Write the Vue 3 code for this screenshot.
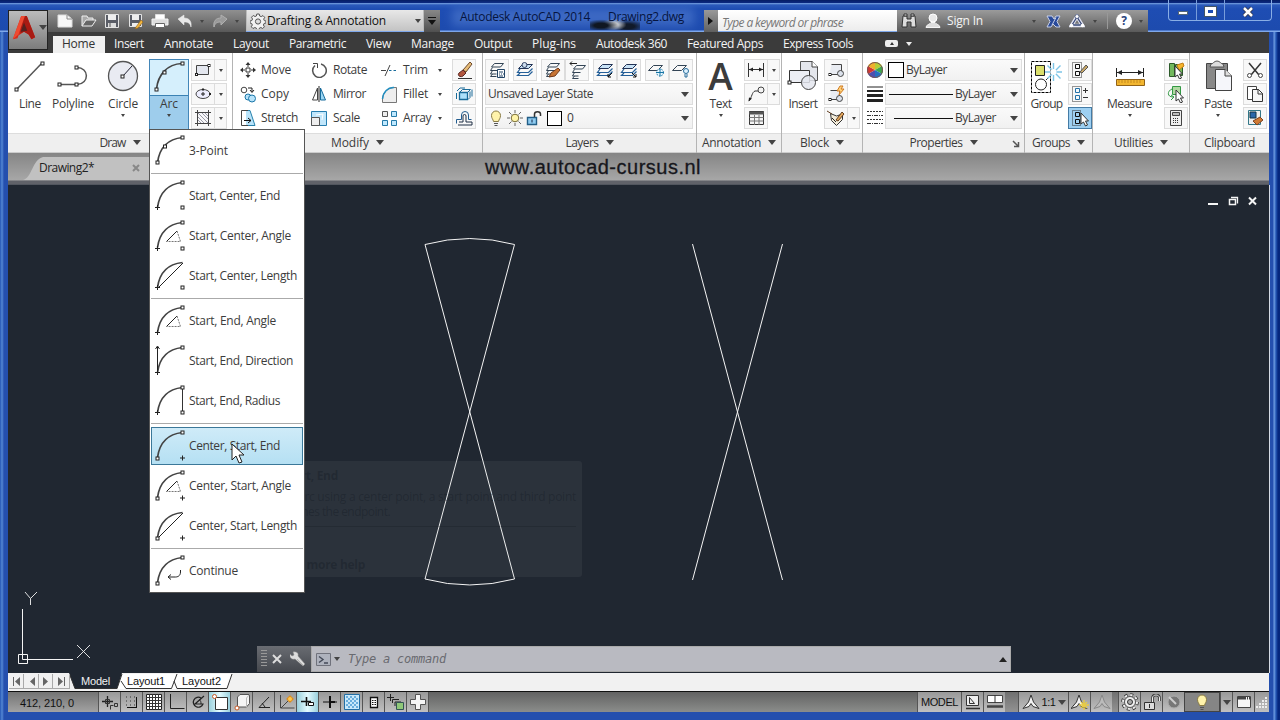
<script setup>
import { h } from 'vue'

// Spreads or tightens a label so that it fills the given width in pixels.
const vFit = {
  mounted(el, { value }) {
    if (!value) return
    const natural = el.getBoundingClientRect().width
    el.style.letterSpacing = (value - natural) / el.textContent.length + 'px'
  }
}

const sq = (x, y, s = 3) => `<rect x="${x - s / 2}" y="${y - s / 2}" width="${s}" height="${s}" fill="#fff" stroke="#222"/>`
const plus = (x, y) => `<path d="M${x - 2.5} ${y}h5M${x} ${y - 2.5}v5" stroke="#222"/>`
const arcLine = '<path d="M6.500 31.500C8.500 17 17 8 31.500 6.500" stroke="#444" stroke-width="1.700"/>'
const angle = '<path d="M15.500 25.500L26 15" stroke="#222"/><path d="M26 15L29.500 25.500H15.500" stroke="#777" stroke-dasharray="2 1"/>'
const chord = '<path d="M8 31L32 7" stroke="#222"/>'
const sheets = '<path d="M6.500 2.500h9l-3 3.500h-9zM4.500 6.500L2.500 9.500h8M4.500 9.500L2.500 13h6M4.500 13L2.500 15.500h6" stroke="#345"/>'
const sheetsBlue = '<path d="M6.500 3.500h10l-4 4h-10z" fill="#c8e2f6" stroke="#235"/><path d="M4 8l-2.500 3.500h11l4-4M4 12l-2.500 2.500h11l4-4" stroke="#245f98" stroke-width="1.200"/>'
const bulb = '<path d="M5.500 11.500C5 9 3.500 8.500 3.500 5.500a4.500 4.500 0 0 1 9 0C12.500 8.500 11 9 10.500 11.500z" fill="#fff3ab" stroke="#887a45"/><path d="M6 13.500h4M6.500 15.500h3" stroke="#555"/>'

const icons = {
  new: [16, 14, '<path d="M1 1h9l5 4v8H1z" fill="#f7f7f7" stroke="#ddd"/><path d="M10 1v4h5" stroke="#888"/>'],
  open: [16, 14, '<path d="M1 12V2h5l1 2h5v2" fill="#aaa" stroke="#eee"/><path d="M1 12l4-6h10l-4 6z" fill="#666" stroke="#eee"/>'],
  save: [16, 16, '<path d="M1.500 1.500h13v13h-13z" fill="#5a5d66" stroke="#e4e4e4"/><path d="M4 2h8v5H4z" fill="#eee" stroke="none"/><path d="M4 10h8v4H4z" fill="#ddd" stroke="none"/><path d="M6 10v4" stroke="#555"/>'],
  saveas: [16, 16, '<path d="M1.500 1.500h12v12h-12z" fill="#5a5d66" stroke="#e4e4e4"/><path d="M4 2h7v5H4zM4 10h7v3H4z" fill="#eee" stroke="none"/><path d="M8 14l5-7 2 2-5 6-3 1z" fill="#f2b53d" stroke="#8b5d16" stroke-width=".600"/>'],
  print: [18, 16, '<path d="M4.500 6V1.500h9V6" fill="#fff" stroke="#ddd"/><path d="M1 6h16v6H1z" fill="#ddd" stroke="#f4f4f4"/><path d="M4.500 10.500h9v4h-9z" fill="#fff" stroke="#666"/>'],
  undo: [16, 14, '<path d="M1 5l6-4v3c5 0 8 3 7 9-1-4-3-5-7-5v3z" fill="#e8e8e8" stroke="#eee" stroke-width=".500"/>'],
  redo: [16, 14, '<path d="M15 5L9 1v3C4 4 1 7 2 13c1-4 3-5 7-5v3z" fill="#9a9a9a" stroke="#b0b0b0"/>'],
  gear: [16, 16, '<path d="M6.800 1h2.400l.5 2 1.500.600 1.800-1 1.700 1.700-1 1.800.6 1.500 1.700.400v2l-2 .500-.600 1.500 1 1.800-1.700 1.700-1.800-1-1.500.600-.5 1.900H6.800l-.5-1.900-1.500-.600-1.800 1-1.700-1.700 1-1.800-.6-1.500L0 10V8l1.900-.500.600-1.500-1-1.800L3.200 2.500l1.800 1 1.400-.500z" fill="#f2f2f2" stroke="#555"/><circle cx="8" cy="8.500" r="2.600" fill="#ddd" stroke="#555"/>'],
  logo: [28, 28, '<path d="M2 26L11 1h6l9 23-4 2-3-5-5-3-6 4-1 3z" fill="#d52b1c" stroke="none"/><path d="M11 1h6l9 23-4 2-3-5-5-3-4 2z" fill="#a81b13" stroke="none"/><path d="M14 8l3.500 9-7 1z" fill="#54221f" stroke="none"/><path d="M11 1h4L8 21l-6 5z" fill="#ee4a31" stroke="none"/>'],
  binoc: [16, 16, '<path d="M2 3h4v3h4V3h4l1 11h-5V9H6v5H1z" fill="#ddd" stroke="#333"/><path d="M3 1h3v2H3zM10 1h3v2h-3z" fill="#eee" stroke="#333"/>'],
  user: [16, 16, '<circle cx="8" cy="5" r="4" fill="#e8e8e8" stroke="#fff"/><path d="M1 14.500c0-3 4-3 5-5h4c1 2 5 2 5 5z" fill="#ddd" stroke="#f5f5f5"/>'],
  exchange: [15, 13, '<path d="M1 1h5l2 3 2-3h4L11 6.500 14 12h-4L7 9l-2 3H1l3-5.500z" fill="#294a9a" stroke="#c8d0e8"/><path d="M10 2.500L6 10" stroke="#c8d0e8"/>'],
  a360: [16, 14, '<path d="M8 2.500L2.500 11.500h11z" stroke="#e3e5f4" stroke-width="3.500"/><path d="M8 3L3 11h10z" stroke="#394976" stroke-width="1.300"/><circle cx="8" cy="2.500" r="2" fill="#fff" stroke="#394976" stroke-width=".700"/><circle cx="2.500" cy="11.500" r="1.800" fill="#fff" stroke="none"/><circle cx="13.500" cy="11.500" r="1.800" fill="#fff" stroke="none"/>'],
  line: [32, 32, '<path d="M3 29L28 3" stroke="#555" stroke-width="1.500"/>' + sq(2.5, 29.5) + sq(28.5, 3.5)],
  polyline: [32, 32, '<path d="M3 24.500h17c13-1 12-17 0-17" stroke="#555" stroke-width="1.500"/>' + sq(2.5, 24.5) + sq(19.5, 24.5) + sq(19.5, 7.5)],
  circle: [32, 32, '<circle cx="16" cy="16" r="14.500" fill="#e9ebf2" stroke="#555" stroke-width="1.300"/><path d="M16 16L25 6" stroke="#223"/>' + sq(15.5, 16.5)],
  arc: [32, 32, '<path d="M3.500 29C5 15 14 4 29 3.500" stroke="#444" stroke-width="1.700"/>' + sq(3.5, 29.5) + sq(11.5, 12.5) + sq(29.5, 3.5)],
  rect: [16, 16, '<path d="M1.500 3.500h12v9h-12z" fill="#e4e7ef" stroke="#444"/>' + sq(1.5, 12.5, 2) + sq(14, 3.5, 2)],
  ellipse: [16, 16, '<ellipse cx="8" cy="8" rx="7" ry="4.500" fill="#eef" stroke="#444"/><path d="M6 8h4M8 6v4" stroke="#222"/>' + sq(15, 8, 1) + sq(8, 3.5, 1)],
  hatch: [18, 18, '<path d="M3.500 1v16M14.500 1v16M1 3.500h16M1 14.500h16" stroke="#444"/><path d="M4 4l10 10M8 4l6 6M4 8l6 6M4 11l3 3M11 4l3 3" stroke="#99a"/>'],
  move: [16, 16, '<path d="M6 6h4v4H6zM8 1v4M8 11v4M1 8h4M11 8h4" stroke="#333"/><path d="M8 0l2.500 3h-5zM8 16l2.500-3h-5zM0 8l3-2.500v5zM16 8l-3-2.500v5z" fill="#333" stroke="none"/>'],
  copy: [18, 17, '<circle cx="4" cy="4" r="2.800"/><circle cx="8" cy="11" r="3" fill="#b8e3fa" stroke="#1976a8"/><circle cx="12" cy="12.500" r="3.500" fill="#b8e3fa" stroke="#1976a8"/><path d="M8 2h4v4M10 4l2 2.500 2-2.500" stroke="#222"/>'],
  stretch: [17, 17, '<path d="M6 .500h4l5 15H6" fill="#b8e3fa" stroke="#2680aa"/><path d="M8 .500H1.500v15H8" stroke="#444"/><path d="M4 10.500h7M8 8l3 2.500-3 2.500" stroke="#111"/>'],
  rotate: [16, 16, '<path d="M10 2A6.800 6.800 0 1 1 4 3.500" stroke="#555" stroke-width="1.500"/><path d="M2 1.500h4.500V6" stroke="#444"/>'],
  mirror: [16, 16, '<path d="M6.500 2v12h-5z" fill="#fff" stroke="#444"/><path d="M9.500 2v12h5z" fill="#9cd7f4" stroke="#176b9b"/><path d="M8 0v16" stroke="#222"/>'],
  scale: [17, 17, '<path d="M.500 1.500h15v14H.500z" fill="#c0e6fb" stroke="#267daf"/><path d="M.500 7.500h8v8h-8z" fill="#eee" stroke="#555"/><path d="M5 5l7-1-1 6" stroke="#fff"/>'],
  trim: [17, 16, '<path d="M0 8.500h5M9 3L4 14" stroke="#444"/><path d="M8 8.500h9" stroke="#176b9b" stroke-dasharray="2.500 2"/>'],
  fillet: [17, 17, '<path d="M1.500 16.500V13C2 6 7 1 15.500 1.500v15z" fill="#eee" stroke="#777"/><path d="M1.500 13C2 6 7 1 13 1.500" stroke="#238fc1" stroke-width="1.500"/>'],
  array: [17, 17, '<path d="M1.500 1.500h5v5h-5z" fill="#eee" stroke="#555"/><path d="M10.500 1.500h5v5h-5zM1.500 10.500h5v5h-5zM10.500 10.500h5v5h-5z" fill="#c0e9ff" stroke="#247aa8"/>'],
  erase: [18, 18, '<path d="M8 9L15 1l2 2-6 8z" fill="#e7bd78" stroke="#6d482b"/><path d="M4 12l4-3 3 3-3 3c-3 2-6-1-4-3z" fill="#b2573e" stroke="#5c2924"/><path d="M3 17.500h14" stroke="#333"/>'],
  explode: [18, 18, '<path d="M4.500 7.500h8v7h-8z" fill="#ace1fb" stroke="#1a6b99" stroke-width="1.300"/><path d="M4.500 7.500l3-3h8l-3 3M15 6.500v6l-2 2" stroke="#1a6b99"/><path d="M1.500 8v6M2 6l3-3h5M17 4.500v7" stroke="#1a6b99"/>'],
  offset: [18, 18, '<path d="M1.500 14.500v-4h5V6a3.500 3.500 0 0 1 7 0v4.500h3" stroke="#225d90"/><path d="M3 16h14v-3h-6V7a1.500 1.500 0 0 0-3 0v6H4" stroke="#1e2e45"/>'],
  layerProps: [18, 18, sheets + '<path d="M9.500 8.500h7v8h-7z" fill="#fff" stroke="#246"/><path d="M11 11h4M11 13h1M13 13h1M15 13h1M11 15h4" stroke="#246"/>'],
  layerMake: [18, 18, sheetsBlue + '<circle cx="8.500" cy="4" r="2.500" fill="#cde" stroke="#346"/>'],
  layerMatch: [18, 18, sheets + '<path d="M7 12l7-5 2 2-5 6-6 1z" fill="#c87535" stroke="#713b1d"/>'],
  layerPrev: [18, 18, '<g transform="translate(2 2)">' + sheets + '</g><path d="M9 2.500H2M4 .500L2 2.500l2 2" stroke="#222"/>'],
  layerIso: [18, 18, sheetsBlue + '<path d="M16 12l-4 4M12 13v3h3" stroke="#111"/>'],
  layerUniso: [18, 18, sheetsBlue + '<path d="M12 12l4 4M16 13v3h-3" stroke="#111"/>'],
  layerFreeze: [18, 18, '<path d="M5.500 4.500h9l-5 5h-9z" stroke="#345"/><circle cx="12" cy="11.500" r="3.500" fill="#e7f7ff" stroke="#1674a5" stroke-dasharray="1.500 1"/><path d="M8 11.500h8M12 7.500v8" stroke="#1674a5"/>'],
  layerOff: [18, 18, '<path d="M5.500 4.500h9l-5 5h-9z" stroke="#345"/><circle cx="14" cy="10" r="2.500" fill="#dff2ff" stroke="#276c9b"/><path d="M13 13v3h2v-3" stroke="#276c9b"/>'],
  bulb: [16, 17, bulb],
  sun: [16, 16, '<circle cx="8" cy="8" r="3.800" fill="#fff4a9" stroke="#776b35"/><path d="M8 0v3M8 13v3M0 8h3M13 8h3M2 2l2.500 2.500M11.500 11.500L14 14M14 2l-2.500 2.500M4.500 11.500L2 14" stroke="#666"/>'],
  lock: [17, 16, '<path d="M1.500 7.500h9v7h-9z" fill="#8ecbf0" stroke="#235e86" stroke-width="1.400"/><path d="M8.500 7V4c0-3 6-3 6 0v2" stroke="#333" stroke-width="1.500"/><path d="M6 9.500v3" stroke="#124"/>'],
  greylock: [18, 17, '<path d="M1.500 8.500h10v7h-10z" fill="#ddd" stroke="#333"/><path d="M9.500 8V4c0-4 7-4 7 0v3" stroke="#333" stroke-width="2.500"/><path d="M9.500 8V4c0-4 7-4 7 0v3" stroke="#eee"/><path d="M6.500 10v4" stroke="#333"/>'],
  dim: [18, 18, '<path d="M1.500 2v14M16.500 2v14M2 8.500h14" stroke="#333"/><path d="M2 8.500l4-2v4zM16 8.500l-4-2v4z" fill="#222" stroke="none"/>'],
  leader: [18, 18, '<circle cx="14" cy="5" r="3" fill="#f4f4f4"/><path d="M11 6H8c-3 1-3 6-6 10" stroke="#333"/><path d="M1.500 16.500l.5-4 3 1z" fill="#222" stroke="none"/>'],
  table: [17, 17, '<path d="M1.500 1.500h14v13h-14z" fill="#f4f4f4" stroke="#333"/><path d="M1 3h15" stroke="#555" stroke-width="3"/><path d="M1.500 7.500h14M1.500 11h14M6.500 5v10M11 5v10" stroke="#777"/>'],
  insert: [32, 32, '<path d="M13.500 1.500h12l5 5v14h-17z" fill="#e4e6ec" stroke="#555"/><path d="M25 1v6h6" fill="#fff"/><path d="M2.500 10.500h20v12h-20z" fill="#eceef4" stroke="#333"/><circle cx="21.500" cy="22.500" r="7" fill="#e4e6ef" fill-opacity=".850" stroke="#444"/>' + sq(2.5, 22.5)],
  blockCreate: [18, 18, '<path d="M4.500 3.500h10v10h-12" fill="#e9ecf2"/><circle cx="13.500" cy="12.500" r="3" fill="#dbe1eb"/>' + sq(3, 13.5, 2)],
  blockEdit: [18, 18, '<path d="M3.500 5.500h9v9h-9" fill="#e9ecf2"/><circle cx="12.500" cy="13.500" r="3" fill="#dbe1eb"/><path d="M13 1l-3 5h3l-1 4 5-6h-3l2-3z" fill="#ffd37c" stroke="#d07a20"/>' + sq(3, 14.5, 2)],
  blockAttr: [18, 18, '<path d="M3.500 4.500l1 7 5 5 6-6V5l-6 2z" fill="#f4ecd9" stroke="#333"/><path d="M0 2l5 3M9 11l6-8 2 2-6 7z" fill="#e3a85d" stroke="#613e20"/><path d="M5 9l4 4" stroke="#222"/>'],
  wheel: [16, 16, '<g stroke="none"><path d="M8 8V0a8 8 0 0 1 7 4z" fill="#b6cf35"/><path d="M8 8l7-4a8 8 0 0 1 0 8z" fill="#3fa84f"/><path d="M8 8l7 4a8 8 0 0 1-7 4z" fill="#2670c0"/><path d="M8 8v8a8 8 0 0 1-7-4z" fill="#4e4fb0"/><path d="M8 8l-7 4a8 8 0 0 1 0-8z" fill="#d43731"/><path d="M8 8L1 4a8 8 0 0 1 7-4z" fill="#efb12d"/></g><circle cx="8" cy="8" r="7.500" stroke="#755"/>'],
  weights: [16, 16, '<path d="M0 1h16" stroke="#222"/><path d="M0 5h16" stroke="#222" stroke-width="2"/><path d="M0 9.500h16" stroke="#222" stroke-width="3"/><path d="M0 14.500h16" stroke="#222" stroke-width="3"/>'],
  types: [16, 16, '<path d="M0 1.500h16M0 9.500h16" stroke="#333" stroke-dasharray="2 1"/><path d="M0 5.500h16M0 13.500h16" stroke="#333" stroke-dasharray="4 1 1 1"/>'],
  group: [34, 34, '<path d="M1.500 1.500h19v31h-19z" stroke="#000" stroke-dasharray="3 1"/><path d="M5.500 5.500h9v10h-9z" fill="#dbdf6c" stroke="#222"/><circle cx="11" cy="24.500" r="5.500" stroke="#222"/><path d="M16 20l5-5" stroke="#222"/><path d="M23.500 3v18M15 12h17M17.500 5.500l13 13M17.500 18.500l13-13" stroke="#7dc5e7" stroke-width="1.400"/><circle cx="23.500" cy="12" r="3" fill="#fff" stroke="none"/>'],
  ungroup: [18, 18, '<path d="M1.500 1.500h9v15h-9z" stroke="#333" stroke-dasharray="1 1"/><path d="M4.500 3.500h4v4h-4zM4.500 10.500h4v4h-4z" stroke="#111"/><path d="M9 11l6-7 2 2-6 6z" fill="#caa968" stroke="#555"/>'],
  groupEdit: [18, 18, '<path d="M1.500 1.500h9v15h-9z" stroke="#333" stroke-dasharray="1 1"/><path d="M4.500 3.500h4v4h-4zM4.500 10.500h4v4h-4z" stroke="#2572a8"/><path d="M12 5.500h5M14.500 3v5M12 12.500h5" stroke="#333"/>'],
  groupSel: [18, 18, '<path d="M1.500 1.500h8v15h-8z" stroke="#333" stroke-dasharray="1 1"/><path d="M4.500 3.500h4v4h-4zM4.500 10.500h4v4h-4z" stroke="#111"/><path d="M10 4v11l2.500-2 2 4 2-1-2-4h3z" fill="#fff" stroke="#333"/>'],
  measure: [32, 32, '<path d="M2.500 8v9M29.500 8v9M3 12.500h26" stroke="#222"/><path d="M3 12.500l5-2.500v5zM29 12.500l-5-2.500v5z" fill="#222" stroke="none"/><path d="M2.500 19.500h28v6h-28z" fill="#f2b630" stroke="#926318"/><path d="M5 20v3M8 20v3M11 20v3M14 20v3M17 20v3M20 20v3M23 20v3M26 20v3" stroke="#c58a1c"/>'],
  select: [18, 18, '<path d="M2.500 2.500h5v13h-5zM8.500 3.500h7v11h-7z" fill="#72b85d" stroke="#2c5a2a"/><path d="M10 4l6-2 1 3-5 4z" fill="#f6b52d" stroke="#c47f18"/><path d="M8 5v11l2.500-2 2 4 2-1-2-4h3z" fill="#fff" stroke="#333"/>'],
  quick: [18, 18, '<path d="M5.500 1.500h8v8h-8z" fill="#b0d9a1" stroke="#394"/><path d="M5 4C0 6 0 12 6 12M4 10l3 2-3 3" stroke="#394"/><path d="M9 5v11l2.500-2 2 4 2-1-2-4h3z" fill="#fff" stroke="#333"/>'],
  calc: [16, 16, '<path d="M2.500.500h11v15h-11z" fill="#eee"/><path d="M4.500 2.500h7v3h-7z" fill="#bbb"/><path d="M5 8.500h6M5 10.500h6M5 12.500h6" stroke="#333" stroke-dasharray="1 1"/>'],
  paste: [28, 32, '<path d="M2.500 3.500h21v25h-21z" fill="#888" stroke="#444"/><path d="M7 4c2 0 3-3 6-3s4 3 6 3l1 3H6z" fill="#ddd" stroke="#555"/><path d="M11.500 9.500h10l6 6v15h-16z" fill="#f5f6fa" stroke="#444"/><path d="M21 9v7h7" fill="#ddd"/>'],
  cut: [18, 18, '<path d="M3 2l10 12M15 2L5 14" stroke="#333" stroke-width="1.500"/><circle cx="3.500" cy="14.500" r="2" fill="#fff"/><circle cx="14.500" cy="14.500" r="2" fill="#fff"/>'],
  copyclip: [18, 18, '<path d="M1.500 1.500h9v13h-9z" fill="#fff"/><path d="M6.500 4.500h6l4 4v8h-10z" fill="#f5f5f5" stroke="#333"/><path d="M12 4v5h5" stroke="#333"/>'],
  match: [18, 18, '<path d="M2.500 1.500h12v14h-12z" fill="#eee" stroke="#378"/><path d="M4 3h6v6H4z" fill="#2a66a9" stroke="#134"/><path d="M7 12l7-4 3 3-6 5z" fill="#d07932" stroke="#7a4020"/>'],
  wrench: [16, 16, '<path d="M13 14L7 8M3 1l1 3-2 1-2-2c-1 4 2 6 5 5l8 7 2-2-7-8c1-3-2-5-5-4z" fill="#ddd" stroke="#888" stroke-width=".500"/>'],
  prompt: [15, 13, '<path d="M.500.500h14v12H.500z" fill="#aeb2bd" stroke="#70727c"/><path d="M3 3.500l4 3-4 3M8 10h4" stroke="#444a58" stroke-width="1.400"/>'],
  s1: [18, 18, '<path d="M1 8.500h11M6.500 3v11" stroke="#222" stroke-width="1.300"/><path d="M4.500 6.500h4v4h-4zM9.500 16.500v-4h3M13.500 10.500h3v3h-3z" stroke="#333"/>'],
  s2: [18, 18, '<path d="M3 4h9M3 8h9M3 12h9" stroke="#333" stroke-dasharray="1 3"/><path d="M4 14.500h9M13.500 4v11" stroke="#111"/>'],
  s3: [18, 18, '<path d="M1.500 1.500h15v15h-15z" fill="#fff" stroke="#222"/><path d="M4.500 1v16M7.500 1v16M10.500 1v16M13.500 1v16M1 4.500h16M1 7.500h16M1 10.500h16M1 13.500h16" stroke="#333"/>'],
  s4: [18, 18, '<path d="M3.500 1v14.500h14" stroke="#222"/>'],
  s5: [18, 18, '<path d="M12 5A5 5 0 1 0 14 11H6l9-8" stroke="#222" stroke-width="1.200"/><path d="M10 6.500c2 1 2 3 2 4.500" stroke="#222"/>'],
  s6: [18, 18, '<path d="M4.500 4.500h12v12h-12z" fill="#fff" stroke="#333"/><circle cx="3.500" cy="3.500" r="2" fill="#fff" stroke="#c95b28"/>'],
  s7: [18, 18, '<path d="M7 1.500h9.500v9l-3 3.500H4.500V4z" fill="#f5f5f5" stroke="#555"/><path d="M13.500 14V5l3-3.500" stroke="#bbb"/><circle cx="4" cy="15" r="2" fill="#fff" stroke="#c95b28"/>'],
  s8: [18, 18, '<path d="M14 4L4 14.500h11M7 10l3 4" stroke="#222"/>'],
  s9: [18, 18, '<path d="M3.500 2v13h14M4 15l9-9" stroke="#444"/><path d="M13 2.500v7M9.500 6h7" stroke="#dc8a18" stroke-width="1.500"/><circle cx="13" cy="6" r="2.500" fill="#ffc84d" stroke="#dc8a18"/>'],
  s10: [18, 18, '<path d="M2 8.500h10M7.500 4v9" stroke="#111" stroke-width="1.600"/><path d="M9.500 9.500h5v3h-5z" fill="#fff" stroke="#111"/>'],
  s11: [18, 18, '<path d="M2 9h14" stroke="#111"/><path d="M9 3v12M9 9h5" stroke="#111" stroke-width="2"/>'],
  s12: [18, 18, '<path d="M1.500 1.500h15v15h-15z" fill="#c8e8fa" stroke="#236fa5"/><path d="M3 4h12M3 8h12M3 12h12" stroke="#68addd" stroke-width="2" stroke-dasharray="2 2"/><path d="M5 6h10M5 10h10M5 14h10" stroke="#68addd" stroke-width="2" stroke-dasharray="2 2"/>'],
  s13: [18, 18, '<path d="M5.500 4.500h7v10h-7z" fill="#fff" stroke="#111" stroke-width="1.300"/><path d="M7 7.500h4M7 9.500h4M7 11.500h4" stroke="#111" stroke-dasharray="1.500 1"/>'],
  s14: [18, 18, '<path d="M0 4.500h7M3.500 1v7M5.500 10V6.500H12M8 13v-4h6" stroke="#222"/><path d="M9.500 9.500h7v7h-7z" fill="#8fc878" stroke="#355"/>'],
  s15: [18, 18, '<path d="M6.500 1.500h5v5h5v5h-5v5h-5v-5h-5v-5h5z" fill="#f6f6f6" stroke="#555"/>'],
  m1: [18, 18, '<path d="M2.500 2.500h12v10h-12z" fill="#eee" stroke="#333"/><path d="M5.500 4.500v6h5z" stroke="#333"/><path d="M2 15.500h14" stroke="#333" stroke-width="1.500"/>'],
  m2: [18, 18, '<path d="M1.500 2.500h15v7h-15z" fill="#fff" stroke="#444"/><path d="M9 2v8" stroke="#333"/><path d="M1 13.500h16" stroke="#444" stroke-width="2.500"/>'],
  scaleFig: [18, 17, '<path d="M9 1L6.500 8 1 14.500l6-2 2-3 2 3 6 2L11.500 8z" fill="#f3f3f3" stroke="#333"/>'],
  scaleDim: [18, 17, '<path d="M9 1L6.500 8 1 14.500l6-2 2-3 2 3 6 2L11.500 8z" fill="#bbb" stroke="#888"/>'],
  scaleStar: [18, 17, '<path d="M8 1L5.500 8 0 14.500l6-2 2-3 2 3 6 2L10.500 8z" fill="#f3f3f3" stroke="#333"/><path d="M13 6v10M8 11h10M10 8l6 6M16 8l-6 6" stroke="#e7cb45" stroke-width="1.400"/>'],
  gearLight: [18, 18, '<circle cx="9" cy="9" r="7.300" stroke="#333" stroke-width="3" stroke-dasharray="3 2.730"/><circle cx="9" cy="9" r="7" stroke="#eee" stroke-width="2" stroke-dasharray="2.300 3.200"/><circle cx="9" cy="9" r="5.500" fill="#eee" stroke="#555"/><circle cx="9" cy="9" r="2.500" fill="#aaa" stroke="#333"/>'],
  ball: [16, 16, '<circle cx="8" cy="8" r="6" fill="#777" stroke="#aaa"/><path d="M3 3l7 7" stroke="#ccc" stroke-width="2"/>'],
  clean: [16, 16, '<path d="M1.500 2.500h13v11h-13z" fill="#f5f5f5" stroke="#444"/><path d="M2 4h12" stroke="#444" stroke-width="3" stroke-dasharray="8 1 1 1 1 1"/>'],
  grip: [14, 16, '<path d="M11 3v2M8 6v2M11 6v2M5 9v2M8 9v2M11 9v2M2 12v2M5 12v2M8 12v2M11 12v2" stroke="#eee" stroke-width="2"/>'],
  a3: [36, 40, arcLine + sq(31.5, 6.5) + sq(14, 15.5) + sq(6.5, 31.5)],
  sce: [36, 40, arcLine + sq(31.5, 6.5) + plus(6.5, 31.5) + sq(31.5, 31.5)],
  sca: [36, 40, arcLine + sq(31.5, 6.5) + plus(6.5, 32.5) + sq(31.5, 32.5) + angle],
  scl: [36, 40, arcLine + chord + plus(6.5, 31.5) + sq(31.5, 31.5)],
  sea: [36, 40, arcLine + sq(31.5, 6.5) + plus(6.5, 31.5) + angle],
  sed: [36, 40, arcLine + sq(31.5, 6.5) + plus(6.5, 31.5) + '<path d="M6.500 31V6M4.500 8l2-3 2 3" stroke="#222"/>'],
  ser: [36, 40, arcLine + '<path d="M31.500 8v23" stroke="#333"/>' + sq(31.5, 6.5) + plus(6.5, 31.5) + sq(31.5, 31.5)],
  cse: [36, 40, arcLine + sq(31.5, 6.5) + sq(6.5, 32.5) + plus(31.5, 32)],
  csa: [36, 40, arcLine + sq(31.5, 6.5) + sq(6.5, 32.5) + plus(31.5, 32) + angle],
  csl: [36, 40, arcLine + chord + sq(6.5, 32.5) + plus(31.5, 32)],
  cont: [36, 40, arcLine + sq(31.5, 6.5) + sq(6.5, 32.5) + '<path d="M29.500 19v2c0 4-3 5-5 5h-7M20 23.500l-3 2.500 3 2.500" stroke="#222"/>']
}

const Icon = (p) => {
  const [w, ht, body] = icons[p.name]
  return h('svg', { class: 'ico', width: w, height: ht, viewBox: `0 0 ${w} ${ht}`, innerHTML: body })
}
Icon.props = ['name']

const tabs = [['Home', 33], ['Insert', 30], ['Annotate', 49], ['Layout', 36], ['Parametric', 57], ['View', 25], ['Manage', 43], ['Output', 38], ['Plug-ins', 44], ['Autodesk 360', 71], ['Featured Apps', 76], ['Express Tools', 70]]
const modify = [
  [['move', 'Move', 30], ['copy', 'Copy', 28], ['stretch', 'Stretch', 37]],
  [['rotate', 'Rotate', 34], ['mirror', 'Mirror', 33], ['scale', 'Scale', 27]],
  [['trim', 'Trim', 25], ['fillet', 'Fillet', 25], ['array', 'Array', 28]]
]
const layerTools = [['layerProps'], ['layerMake'], ['layerMatch', 'layerPrev'], ['layerIso', 'layerUniso'], ['layerFreeze', 'layerOff']]
const arcMenu = [
  [['a3', '3-Point', 39]],
  [['sce', 'Start, Center, End', 91], ['sca', 'Start, Center, Angle', 102], ['scl', 'Start, Center, Length', 108]],
  [['sea', 'Start, End, Angle', 87], ['sed', 'Start, End, Direction', 104], ['ser', 'Start, End, Radius', 91]],
  [['cse', 'Center, Start, End', 91], ['csa', 'Center, Start, Angle', 102], ['csl', 'Center, Start, Length', 108]],
  [['cont', 'Continue', 49]]
]
const statusOn = [6, 10]
</script>

<template>
  <div class="window">
    <header class="titlebar">
      <div class="app-button"><Icon name="logo" /><i class="caret"></i></div>
      <div class="quick">
        <Icon name="new" /><Icon name="open" /><Icon name="save" /><Icon name="saveas" /><Icon name="print" /><Icon name="undo" />
        <i class="caret tiny"></i><Icon name="redo" /><i class="caret tiny"></i>
      </div>
      <div class="workspace"><Icon name="gear" /><span v-fit="119">Drafting &amp; Annotation</span><i class="caret"></i></div>
      <div class="more"><b></b><i class="caret"></i></div>
      <div class="title"><div class="glow"></div><div class="smudge"></div><span v-fit="130">Autodesk AutoCAD 2014</span><span class="doc" v-fit="76">Drawing2.dwg</span></div>
      <div class="search-go"><i></i></div>
      <div class="search"><span v-fit="121">Type a keyword or phrase</span></div>
      <div class="account">
        <Icon name="binoc" /><Icon name="user" /><span v-fit="36">Sign In</span><i class="caret tiny"></i>
        <Icon name="exchange" /><Icon name="a360" /><i class="caret tiny"></i><s></s><b class="help">?</b><i class="caret tiny"></i>
      </div>
      <div class="controls"><span><i class="min"></i></span><span><i class="max"></i></span>
        <span><svg width="12" height="12" viewBox="0 0 12 12"><path d="M2 2l8 8M10 2l-8 8" stroke="#334" stroke-width="4" /><path d="M2 2l8 8M10 2l-8 8" stroke="#fff" stroke-width="2.500" /></svg></span>
      </div>
    </header>

    <nav class="tabs">
      <div v-for="(t, i) in tabs" :key="t[0]" class="tab" :class="{ active: i === 0 }"><span v-fit="t[1]">{{ t[0] }}</span></div>
      <div class="pill"><i></i></div><i class="caret white"></i>
    </nav>

    <section class="ribbon">
      <div class="panel draw">
        <div class="body">
          <div class="big line"><Icon name="line" /><span v-fit="22">Line</span></div>
          <div class="big poly"><Icon name="polyline" /><span v-fit="42">Polyline</span></div>
          <div class="big circ"><Icon name="circle" /><span v-fit="30">Circle</span><i class="caret tiny"></i></div>
          <div class="big arc"><Icon name="arc" /><span v-fit="18">Arc</span><i class="caret tiny"></i></div>
          <div class="stack">
            <div v-for="n in ['rect', 'ellipse', 'hatch']" :key="n" class="split"><div class="btn"><Icon :name="n" /></div><div class="drop"><i class="caret tiny"></i></div></div>
          </div>
        </div>
        <footer><span v-fit="26">Draw</span><i class="caret"></i></footer>
      </div>

      <div class="panel modify">
        <div class="body">
          <div v-for="(col, c) in modify" :key="c" class="list">
            <div v-for="m in col" :key="m[0]" class="cmd"><div class="slot"><Icon :name="m[0]" /></div><span v-fit="m[2]">{{ m[1] }}</span><i v-if="c === 2" class="caret tiny"></i></div>
          </div>
          <div class="stack"><div v-for="n in ['erase', 'explode', 'offset']" :key="n" class="btn"><Icon :name="n" /></div></div>
        </div>
        <footer><span v-fit="38">Modify</span><i class="caret"></i></footer>
      </div>

      <div class="panel layers">
        <div class="body">
          <div class="stack wide">
            <div class="toolrow"><div v-for="g in layerTools" :key="g[0]" class="pair"><div v-for="n in g" :key="n" class="btn"><Icon :name="n" /></div></div></div>
            <div class="combo"><span v-fit="105">Unsaved Layer State</span><i class="caret"></i></div>
            <div class="combo state"><Icon name="bulb" /><Icon name="sun" /><Icon name="lock" /><b class="swatch"></b><span>0</span><i class="caret"></i></div>
          </div>
        </div>
        <footer><span v-fit="33">Layers</span><i class="caret"></i></footer>
      </div>

      <div class="panel annotation">
        <div class="body">
          <div class="big"><b class="letter">A</b><span v-fit="22">Text</span><i class="caret tiny"></i></div>
          <div class="stack">
            <div v-for="n in ['dim', 'leader']" :key="n" class="split"><div class="btn"><Icon :name="n" /></div><div class="drop"><i class="caret tiny"></i></div></div>
            <div class="btn"><Icon name="table" /></div>
          </div>
        </div>
        <footer><span v-fit="59">Annotation</span><i class="caret"></i></footer>
      </div>

      <div class="panel block">
        <div class="body">
          <div class="big"><Icon name="insert" /><span v-fit="29">Insert</span></div>
          <div class="stack">
            <div class="btn"><Icon name="blockCreate" /></div>
            <div class="btn"><Icon name="blockEdit" /></div>
            <div class="split"><div class="btn"><Icon name="blockAttr" /></div><div class="drop"><i class="caret tiny"></i></div></div>
          </div>
        </div>
        <footer><span v-fit="29">Block</span><i class="caret"></i></footer>
      </div>

      <div class="panel properties">
        <div class="body">
          <div class="stack keys"><div v-for="n in ['wheel', 'weights', 'types']" :key="n"><Icon :name="n" /></div></div>
          <div class="stack vals">
            <div class="combo"><b class="swatch"></b><span v-fit="41">ByLayer</span><i class="caret"></i></div>
            <div class="combo"><b class="rule"></b><span v-fit="41">ByLayer</span><i class="caret"></i></div>
            <div class="combo"><b class="rule short"></b><span v-fit="41">ByLayer</span><i class="caret"></i></div>
          </div>
        </div>
        <footer><span v-fit="53">Properties</span><i class="caret"></i><svg class="launch" width="8" height="8" viewBox="0 0 8 8"><path d="M1 1l5 5M6.500 2v4.500H2" /></svg></footer>
      </div>

      <div class="panel groups">
        <div class="body">
          <div class="big"><Icon name="group" /><span v-fit="32">Group</span></div>
          <div class="stack"><div class="btn"><Icon name="ungroup" /></div><div class="btn"><Icon name="groupEdit" /></div><div class="btn on"><Icon name="groupSel" /></div></div>
        </div>
        <footer><span v-fit="38">Groups</span><i class="caret"></i></footer>
      </div>

      <div class="panel utilities">
        <div class="body">
          <div class="big"><Icon name="measure" /><span v-fit="45">Measure</span><i class="caret tiny"></i></div>
          <div class="stack"><div v-for="n in ['select', 'quick', 'calc']" :key="n" class="btn"><Icon :name="n" /></div></div>
        </div>
        <footer><span v-fit="39">Utilities</span><i class="caret"></i></footer>
      </div>

      <div class="panel clipboard">
        <div class="body">
          <div class="big"><Icon name="paste" /><span v-fit="28">Paste</span><i class="caret tiny"></i></div>
          <div class="stack"><div v-for="n in ['cut', 'copyclip', 'match']" :key="n" class="btn"><Icon :name="n" /></div></div>
        </div>
        <footer><span v-fit="51">Clipboard</span></footer>
      </div>
    </section>

    <div class="files">
      <svg class="shape" width="150" height="24" viewBox="0 0 150 24"><path d="M0 24C9 22 9 4 20 1H150V24z" fill="#c1c1c1" /></svg>
      <span class="file" v-fit="55">Drawing2*</span><svg class="x" width="8" height="8" viewBox="0 0 8 8"><path d="M1 1l6 6M7 1L1 7" stroke="#888" stroke-width="2" /></svg>
      <span class="site" v-fit="216">www.autocad-cursus.nl</span>
    </div>

    <main class="drawing">
      <svg class="model" width="1261" height="488" viewBox="8 185 1261 488">
        <g fill="none" stroke="#f4f4f4">
          <path d="M425 244.500A173.300 173.300 0 0 1 514.500 244.500L425 579A173.300 173.300 0 0 0 514.500 579Z" />
          <path d="M692.500 244L782.500 580M782.500 244L692.500 580" />
          <path d="M22.500 609V659.500H73M18.500 654.500h9v9h-9z" />
          <path d="M25 592l5.500 6.500L37 592M30.500 598.500V605M77 645l13 13M90 645l-13 13" stroke-width=".900" />
        </g>
        <g fill="none" stroke="#f5f5f5" stroke-width="2">
          <path d="M1208 204h10M1249 197.500l7 7M1256 197.500l-7 7" /><path d="M1229.500 199.500h6v5h-6z" stroke-width="1.500" /><path d="M1231 197.500h6.500v6" stroke-width="1.300" />
        </g>
      </svg>
      <div class="tip">
        <div><b v-fit="100">Center, Start, End</b></div>
        <p><span v-fit="338">Creates an arc using a center point, a start point and third point</span><br><span v-fit="152">that determines the endpoint.</span></p><hr>
        <div><b v-fit="26">ARC</b></div><div class="help-line"><b v-fit="127">Press F1 for more help</b></div>
      </div>
      <div class="command">
        <div class="handle"><i class="dots"></i><svg width="10" height="10" viewBox="0 0 10 10"><path d="M1 1l8 8M9 1L1 9" stroke="#ddd" stroke-width="2" /></svg><Icon name="wrench" /></div>
        <div class="entry"><Icon name="prompt" /><i class="caret tiny"></i><span v-fit="98">Type a command</span><i class="up"></i></div>
      </div>
    </main>

    <div class="layouts">
      <svg width="1261" height="18" viewBox="8 673 1261 18">
        <path d="M8 673H1269V691H8z" fill="#f1f1f1" />
        <path d="M121 674H232L227 689H117z" fill="#fff" />
        <path d="M69 673H122L117 689H75z" fill="#202731" />
        <path d="M69.500 674L75 688.500H117L122 674M121 681l5 7.500h45.500L177 674M174 681l3 7.500h50L232 674" fill="none" stroke="#333" />
        <path d="M9 688.500H70M23.500 674v14M38.500 674v14M52.500 674v14M69.500 674v14" stroke="#aaa" />
        <path d="M20 677l-5 4.500 5 4.500zM35 677l-5 4.500 5 4.500zM43 677l5 4.500-5 4.500zM58 677l5 4.500-5 4.500z" fill="#666" />
        <path d="M13.500 677v9M64.500 677v9" stroke="#666" />
      </svg>
      <div class="names"><span v-fit="29" class="cur">Model</span><span v-fit="38">Layout1</span><span v-fit="39">Layout2</span></div>
    </div>

    <div class="status">
      <div class="coords"><span v-fit="54">412, 210, 0</span></div>
      <div v-for="n in 15" :key="n" class="cell" :class="{ on: statusOn.includes(n) }"><Icon :name="'s' + n" /></div>
      <div class="spacer"></div>
      <div class="cell space"><span v-fit="37">MODEL</span></div>
      <div class="cell"><Icon name="m1" /></div><div class="cell"><Icon name="m2" /></div>
      <div class="gap g1"></div>
      <div class="cell ratio"><Icon name="scaleFig" /><span v-fit="14">1:1</span><i class="caret"></i></div>
      <div class="cell"><Icon name="scaleStar" /></div><div class="cell"><Icon name="scaleDim" /></div>
      <div class="gap g2"></div>
      <div class="cell"><Icon name="gearLight" /></div><div class="cell"><Icon name="greylock" /></div><div class="cell"><Icon name="ball" /></div>
      <div class="cell light"><Icon name="bulb" /></div><div class="cell thin"><i class="caret"></i></div><div class="cell"><Icon name="clean" /></div><div class="cell last"><Icon name="grip" /></div>
    </div>

    <div class="menu">
      <template v-for="(g, i) in arcMenu" :key="i">
        <div v-if="i" class="sep"></div>
        <div v-for="m in g" :key="m[0]" class="item" :class="{ hot: m[0] === 'cse' }"><Icon :name="m[0]" /><span v-fit="m[2]">{{ m[1] }}</span></div>
      </template>
    </div>
    <svg class="cursor" width="14" height="22" viewBox="0 0 14 22"><path d="M1 1v16l4-4 3 7 3-1-3-7h5z" fill="#fff" stroke="#222" /></svg>
  </div>
</template>

<style>
html, body { margin: 0; overflow: hidden; }
</style>

<style scoped>
.window { position: relative; box-sizing: border-box; width: 1280px; height: 720px; padding: 0 11px 0 8px; display: flex; flex-direction: column; overflow: hidden; font: 12px/16px "Open Sans", "Noto Sans", sans-serif; color: #3c3c3c; background: linear-gradient(90deg, #2456b4 0, #5487d4 2px, #244fae 4px, #244fae 1273px, #72a0e4 1274px, #2457b5 1276px, #06277e 1278px); }
.window * { box-sizing: border-box; }
span { white-space: nowrap; display: inline-block; }
.ico { flex: none; fill: none; stroke: #444; display: block; }
.caret { flex: none; width: 0; height: 0; border: 4px solid transparent; border-top: 5px solid #444; border-bottom: 0; }
.caret.tiny { border-width: 3px 2.5px 0; border-top-color: #444; }
.caret.white { border-width: 4px 3px 0; border-top-color: #eee; }

.titlebar { height: 32px; flex: none; margin: 0 -11px 0 -8px; padding: 10px 0 0 8px; display: flex; background: linear-gradient(#051d64 0, #0b2a82 3px, #7aa5e2 3px, #2b5abb 5px, #1e4db3 9px, #1d4bae 30px, #7fa8ea 31px); }
.app-button { position: relative; z-index: 2; width: 40px; height: 40px; border: 1px solid #222; background: linear-gradient(#bcbcbc, #7c7c7c); display: flex; align-items: center; padding: 0 0 5px 2px; gap: 2px; }
.app-button .ico { width: 26px; }
.quick { width: 198px; height: 22px; background: linear-gradient(#909090, #595959); display: flex; align-items: center; gap: 7.5px; padding-left: 9px; }
.workspace { width: 178px; height: 21px; background: linear-gradient(#e8e8e8, #c3c3c3); border: 1px solid #bbb; border-width: 0 1px; display: flex; align-items: center; color: #111; padding-left: 3px; gap: 1px; }
.workspace .caret { margin: 0 2px 0 auto; border-width: 4px 3px 0; }
.more { width: 16px; height: 22px; background: linear-gradient(#888, #505050); padding: 7px 4px; }
.more b { display: block; width: 8px; height: 1px; background: #111; margin-bottom: 2px; }
.more .caret { display: block; border-top-color: #111; }
.title { position: relative; width: 264px; height: 20px; display: flex; padding-left: 20px; align-items: flex-start; color: #06153f; }
.title span { position: relative; flex: none; margin-top: -1px; }
.title .doc { margin-left: 18px; }
.glow { position: absolute; left: 12px; top: -2px; width: 242px; height: 18px; background: #4a75cb; opacity: .7; filter: blur(5px); }
.smudge { position: absolute; left: 150px; top: 2px; width: 50px; height: 18px; background: radial-gradient(ellipse at 22% 75%, #101722 0 12%, transparent 32%), radial-gradient(ellipse at 48% 70%, #c9ccd0 0 10%, transparent 34%), radial-gradient(ellipse at 76% 80%, #111a29 0 12%, transparent 36%); }
.search-go { width: 14px; height: 22px; background: linear-gradient(#999, #606060); padding: 7px 4px; }
.search-go i { display: block; border: 4px solid transparent; border-left: 5px solid #111; border-right: 0; }
.search { width: 179px; height: 21px; background: linear-gradient(#fff, #ececec); padding: 5px 4px; color: #777; font-style: italic; line-height: 15px; }
.account { width: 251px; height: 22px; background: linear-gradient(#9b9b9b, #5a5a5a); display: flex; align-items: center; color: #f4f4f4; padding-left: 4px; }
.account .ico { margin-right: 8px; }
.account span { margin-right: 49px; margin-left: -2px; }
.account .tiny { margin-right: 10px; }
.account s { flex: none; width: 1px; height: 16px; background: #999; margin-right: 8px; }
.account .help { flex: none; width: 16px; height: 16px; border-radius: 50%; background: #fff; color: #29437d; text-align: center; line-height: 16px; margin-right: 7px; }
.account .tiny:last-child { margin-right: 0; }
.controls { width: 104px; height: 21px; margin: -10px 0 0 20px; display: flex; border: 1px solid #89aee5; border-top: 0; border-radius: 0 0 4px 4px; }
.controls span { width: 28px; height: 20px; border-right: 1px solid #789ddb; display: flex; align-items: center; justify-content: center; padding-top: 3px; }
.controls span:last-child { width: 46px; border: 0; }
.min { width: 10px; height: 4px; background: #fff; border: .5px solid #567; margin-top: 3px; }
.max { width: 11px; height: 9px; border: 3px solid #fff; outline: .5px solid #456; }

.tabs { height: 21px; flex: none; background: #3b3b3b; display: flex; padding: 4px 0 0 45px; color: #f4f4f4; }
.tab { height: 17px; padding: 0 10px; line-height: 16px; }
.tab.active { padding: 0 9px; margin-right: -1px; width: 52px; background: #f0f0f0; color: #333; }
.pill { width: 13px; height: 7px; border-radius: 2px; background: #eee; margin: 4px 8px 0 22px; display: flex; justify-content: center; }
.pill i { height: 0; margin-top: 2px; border: 2px solid transparent; border-bottom: 3px solid #333; border-top: 0; }
.tabs > .caret { margin-top: 6px; }

.ribbon { height: 100px; flex: none; display: flex; background: #fff; }
.panel { flex: none; border-right: 1px solid #b4b4b4; display: flex; flex-direction: column; }
.body { height: 80px; padding-top: 6px; display: flex; }
.panel footer { position: relative; height: 20px; background: #efefef; border-top: 1px solid #ddd; border-bottom: 1px solid #ccc; display: flex; justify-content: center; align-items: center; gap: 7px; padding-bottom: 1px; }
.draw { width: 225px; } .modify { width: 250px; } .layers { width: 214px; } .annotation { width: 85px; } .block { width: 81px; }
.properties { width: 162px; } .groups { width: 68px; } .utilities { width: 97px; } .clipboard { width: 79px; border: 0; }
.big { position: relative; display: flex; flex-direction: column; align-items: center; height: 71px; padding-top: 1px; }
.big span { margin-top: 3px; line-height: 17px; }
.big .caret { margin-top: 2px; }
.line { width: 44px; } .poly { width: 42px; } .circ { width: 55px; padding-left: 3px; }
.arc { width: 40px; background: linear-gradient(#d5effc 36px, #9ecdec 36px); border: 1px solid #4386b8; border-bottom: 0; padding-top: 0; background-clip: padding-box; }
.arc::after { content: ""; position: absolute; left: 0; right: 0; top: 35px; height: 1px; background: #3b82b4; }
.draw .stack { margin-left: 2px; }
.stack { display: flex; flex-direction: column; gap: 2px; }
.btn { width: 24px; height: 22px; border: 1px solid #dcdcdc; background: #f8f8f8; display: flex; align-items: center; justify-content: center; }
.btn.on { background: #9ed0f2; border-color: #447ba5; }
.split { display: flex; }
.drop { width: 12px; height: 22px; border: 1px solid #dcdcdc; border-left: 0; background: #f8f8f8; display: flex; align-items: center; justify-content: center; }
.modify .body { padding-left: 7px; }
.list { width: 71px; display: flex; flex-direction: column; gap: 2px; }
.list:nth-child(2) { width: 70px; }
.cmd { height: 22px; display: flex; align-items: center; position: relative; }
.slot { width: 22px; flex: none; }
.list:first-child .slot { width: 21px; }
.cmd .caret { margin: 1px 10px 0 auto; }
.layers .body { padding-left: 2px; }
.wide { width: 208px; }
.toolrow { display: flex; gap: 4px; }
.pair { display: flex; }
.combo { height: 22px; border: 1px solid #ddd; background: linear-gradient(#fafafa, #f1f1f1); display: flex; align-items: center; padding: 0 3px 0 2px; }
.combo .caret { margin-left: auto; }
.state .ico { margin-right: 3px; }
.state .swatch { margin-left: 1px; }
.state span { margin-left: 5px; }
.swatch { flex: none; width: 15px; height: 15px; border: 1px solid #000; background: #fff; }
.annotation .big { width: 47px; }
.letter { flex: none; height: 34px; margin-top: -1px; font-size: 37px; line-height: 34px; font-weight: 600; }
.annotation .big span { margin-top: 2px; }
.block .big { width: 42px; }
.keys { width: 22px; padding-left: 4px; }
.keys div { height: 22px; display: flex; align-items: center; }
.vals { width: 137px; }
.properties .swatch { margin: 0 2px 0 0; width: 16px; height: 16px; }
.rule { width: 64px; height: 1px; background: #111; margin: 0 2px 0 1px; }
.rule.short { width: 59px; margin-left: 6px; }
.launch { position: absolute; right: 4px; top: 6px; fill: none; stroke: #555; stroke-width: 1.5; }
.groups .big { width: 43px; }
.groups .big .ico { height: 34px; margin-bottom: -2px; }
.utilities .big { width: 71px; padding-left: 2px; }
.clipboard .big { width: 53px; padding-left: 3px; }

.files { position: relative; height: 32px; flex: none; background: linear-gradient(#858585, #a7a7a7 27px, #606269 28px, #606269 31px, #444b55); }
.shape { position: absolute; left: 15px; top: 3px; }
.file { position: absolute; left: 31px; top: 7px; color: #222; }
.x { position: absolute; left: 124px; top: 11px; }
.site { position: absolute; left: 477px; top: 2px; font: 20px/24px "Liberation Sans", Arial, sans-serif; color: #17171c; -webkit-text-stroke: .3px #17171c; }

.drawing { position: relative; height: 488px; flex: none; background: #202731; box-shadow: 1px 0 #d5dbe5; }
.model { display: block; }
.tip { position: absolute; left: 224px; top: 276px; width: 350px; height: 116px; background: rgba(160, 170, 170, .09); border-radius: 3px; padding: 7px 6px; color: rgba(12, 18, 27, .3); line-height: 15px; }
.tip b { display: inline-block; white-space: nowrap; }
.tip p { margin: 6px 0 7px; }
.tip hr { border: 0; border-top: 1px solid rgba(10, 15, 22, .2); margin: 0 0 10px; }
.help-line { margin-top: 5px; }
.command { position: absolute; left: 249px; top: 461px; width: 754px; height: 26px; display: flex; }
.handle { width: 54px; background: linear-gradient(#696c72, #45484e); display: flex; align-items: center; padding-left: 4px; gap: 8px; }
.handle > svg:nth-child(2) { margin-left: -3px; }
.dots { width: 6px; height: 18px; background: repeating-linear-gradient(#999 0 1px, transparent 1px 3px); }
.entry { flex: 1; background: #b9bac1; border: 1px solid #aaa; display: flex; align-items: center; padding: 0 3px 0 4px; }
.entry .tiny { margin: 0 8px 0 3px; border-width: 4px 3px 0; }
.entry span { font: italic 12px/16px "DejaVu Sans Mono", monospace; color: #696a70; }
.up { margin-left: auto; border: 4px solid transparent; border-bottom: 5px solid #222; border-top: 0; }

.layouts { position: relative; height: 18px; flex: none; }
.layouts svg { display: block; }
.names { position: absolute; inset: 0; display: flex; padding-left: 73px; color: #111; font: 11px/17px "Liberation Sans", Arial, sans-serif; }
.names span { margin-right: 17px; }
.names .cur { color: #f2f2f2; }

.status { height: 21px; flex: none; display: flex; background: linear-gradient(#626262, #8b8d8b); border-top: 1px solid #111; font: 11.5px/20px "Liberation Sans", Arial, sans-serif; color: #111; }
.coords { width: 90px; padding: 1px 0 0 12px; background: linear-gradient(#747474, #a2a2a2); }
.coords span { line-height: 20px; font-size: 11px; }
.cell { width: 22px; flex: none; border-left: 1px solid #555; background: linear-gradient(#999, #c0c0c0); display: flex; align-items: center; justify-content: center; }
.cell.on { background: linear-gradient(90deg, #9bd0dc, #e4fbff, #9bd0dc); }
.cell:nth-child(16) { box-shadow: 1px 0 #555; }
.spacer { flex: 1; }
.space { width: 44px; font-size: 11px; }
.g1 { width: 13px; } .g2 { width: 6px; }
.gap { flex: none; background: linear-gradient(#707070, #929292); }
.ratio { width: 50px; gap: 2px; font-size: 11px; }
.light { width: 36px; background: #858585; border: 1px solid #444; }
.thin { width: 12px; }
.last { width: 15px; }

.menu { position: absolute; z-index: 5; left: 149px; top: 129px; width: 156px; height: 464px; padding: 1px; border: 1px solid #555; background: #fff; }
.item { height: 40px; display: flex; align-items: center; gap: 2px; width: 152px; }
.item.hot { height: 38px; margin: 1px 0; background: linear-gradient(#cfebf8, #b5e0f3); border: 1px solid #3b7899; }
.hot .ico { margin: 0 0 0 -1px; }
.sep { height: 5px; padding: 2px 0; background: #aaa content-box; }
.cursor { position: absolute; z-index: 6; left: 231px; top: 443px; }
</style>
